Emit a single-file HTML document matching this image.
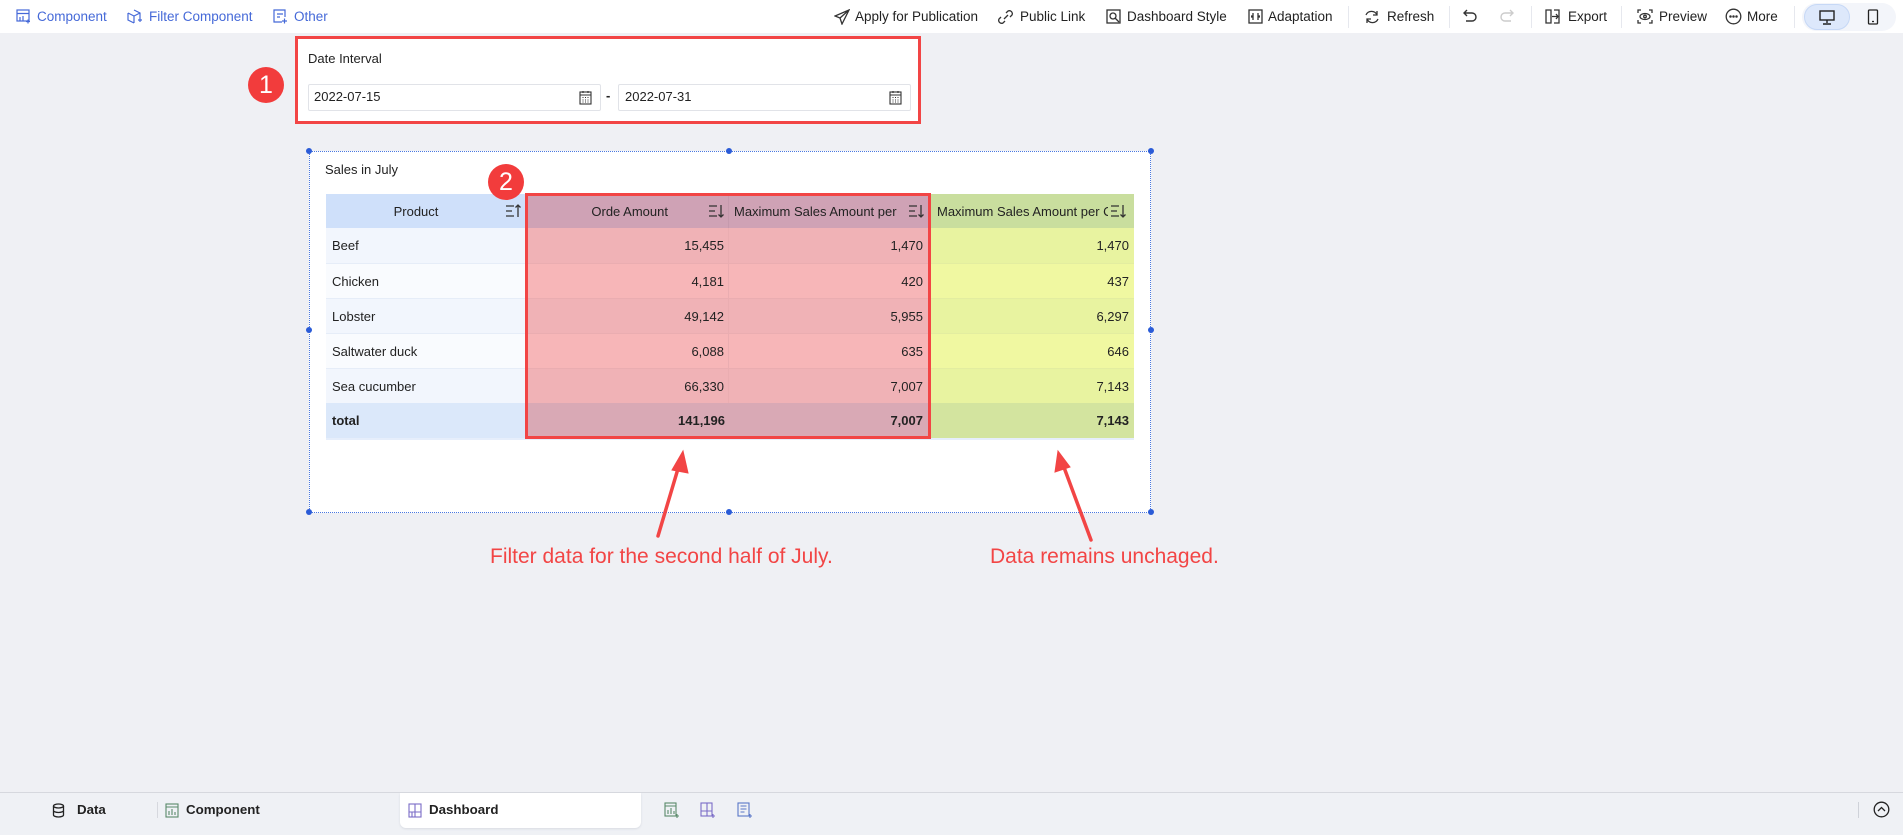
<!DOCTYPE html>
<html><head><meta charset="utf-8"><style>
*{margin:0;padding:0;box-sizing:border-box}
body{width:1903px;height:835px;overflow:hidden;background:#eff0f4;font-family:"Liberation Sans",Arial,sans-serif;position:relative;color:#222}
.a{position:absolute}
.top{left:0;top:0;width:1903px;height:33px;background:#fff}
.t{position:absolute;top:8px;font-size:13.5px;line-height:17px;color:#222;white-space:nowrap}
.b{color:#4569d8}
.sep{position:absolute;top:6px;width:1px;height:22px;background:#e6e8ee}
svg{position:absolute}
.cell{position:absolute;font-size:13px;display:flex;align-items:center}
</style></head><body>
<div class="a top"></div>
<svg style="left:16px;top:9px" width="15" height="15" viewBox="0 0 15 15" fill="none" stroke="#4569d8" stroke-width="1.2"><rect x="1" y="1" width="12" height="11"/><path d="M1 4.5h12M4 8v4M7 7v5M10 12.5h4M12 10.5v4"/></svg>
<div class="t b" style="left:37px">Component</div>
<svg style="left:127px;top:9px" width="16" height="16" viewBox="0 0 16 16" fill="none" stroke="#4569d8" stroke-width="1.2"><path d="M7 1l6 3v5M1 4l6 3 6-3M1 4v7l6 3M7 7v7"/><path d="M11 11h4M13 9v4"/></svg>
<div class="t b" style="left:149px">Filter Component</div>
<svg style="left:273px;top:9px" width="15" height="15" viewBox="0 0 15 15" fill="none" stroke="#4569d8" stroke-width="1.2"><path d="M9 13H1V1h11v7M4 5h6M4 8h3M9 12h5M11.5 9.5v5"/></svg>
<div class="t b" style="left:294px">Other</div>
<svg style="left:834px;top:9px" width="16" height="16" viewBox="0 0 16 16" fill="none" stroke="#333" stroke-width="1.3"><path d="M15 1L1 7l5 2 2 6z M6 9l9-8"/></svg>
<div class="t" style="left:855px">Apply for Publication</div>
<svg style="left:998px;top:9px" width="15" height="16" viewBox="0 0 15 16" fill="none" stroke="#333" stroke-width="1.3"><path d="M6 10l4-4M8 4l2-2a3 3 0 014 4l-2 2M7 12l-2 2a3 3 0 01-4-4l2-2"/></svg>
<div class="t" style="left:1020px">Public Link</div>
<svg style="left:1106px;top:9px" width="15" height="15" viewBox="0 0 15 15" fill="none" stroke="#333" stroke-width="1.3"><rect x="1" y="1" width="13" height="13"/><circle cx="7" cy="7" r="3"/><path d="M9 9l4 4"/></svg>
<div class="t" style="left:1127px">Dashboard Style</div>
<svg style="left:1248px;top:9px" width="15" height="15" viewBox="0 0 15 15" fill="none" stroke="#333" stroke-width="1.3"><rect x="1" y="1" width="13" height="13"/><path d="M5 4v3H3M10 4v3h2M5 11V8H3M10 11V8h2"/></svg>
<div class="t" style="left:1268px">Adaptation</div>
<div class="sep" style="left:1348px"></div>
<svg style="left:1364px;top:9px" width="16" height="16" viewBox="0 0 16 16" fill="none" stroke="#333" stroke-width="1.3"><path d="M13 6a6 6 0 00-11 0M3 10a6 6 0 0011 0M13 2v4H9M3 14v-4h4"/></svg>
<div class="t" style="left:1387px">Refresh</div>
<div class="sep" style="left:1449px"></div>
<svg style="left:1463px;top:9px" width="15" height="15" viewBox="0 0 15 15" fill="none" stroke="#333" stroke-width="1.4"><path d="M4 1L1 4l3 3M1 4h8a4 4 0 010 8H3"/></svg>
<svg style="left:1499px;top:9px" width="15" height="15" viewBox="0 0 15 15" fill="none" stroke="#ccc" stroke-width="1.4"><path d="M11 1l3 3-3 3M14 4H6a4 4 0 000 8h6"/></svg>
<div class="sep" style="left:1531px"></div>
<svg style="left:1545px;top:9px" width="16" height="15" viewBox="0 0 16 15" fill="none" stroke="#333" stroke-width="1.3"><path d="M1 1h5v13H1zM9 1h5v13H9M7 7.5h6M11 5l2 2.5-2 2.5"/></svg>
<div class="t" style="left:1568px">Export</div>
<div class="sep" style="left:1621px"></div>
<svg style="left:1637px;top:9px" width="16" height="15" viewBox="0 0 16 15" fill="none" stroke="#333" stroke-width="1.3"><path d="M1 4V1h3M12 1h3v3M15 11v3h-3M4 14H1v-3"/><ellipse cx="8" cy="7.5" rx="5" ry="3"/><circle cx="8" cy="7.5" r="1.3"/></svg>
<div class="t" style="left:1659px">Preview</div>
<svg style="left:1725px;top:8px" width="17" height="17" viewBox="0 0 17 17" fill="none" stroke="#333" stroke-width="1.3"><circle cx="8.5" cy="8.5" r="7.3"/><circle cx="5.5" cy="8.5" r=".6" fill="#333"/><circle cx="8.5" cy="8.5" r=".6" fill="#333"/><circle cx="11.5" cy="8.5" r=".6" fill="#333"/></svg>
<div class="t" style="left:1747px">More</div>
<div class="sep" style="left:1794px"></div>
<div class="a" style="left:1802px;top:3px;width:94px;height:28px;border-radius:14px;background:#f3f5fa"></div>
<div class="a" style="left:1804px;top:4px;width:46px;height:26px;border-radius:13px;background:#dde8fb;border:1px solid #c6d8f6"></div>
<svg style="left:1819px;top:10px" width="16" height="15" viewBox="0 0 16 15" fill="none" stroke="#222" stroke-width="1.4"><rect x="1" y="1" width="14" height="9"/><path d="M8 10v3M4 14h8"/></svg>
<svg style="left:1867px;top:9px" width="12" height="16" viewBox="0 0 12 16" fill="none" stroke="#222" stroke-width="1.3"><rect x="1.5" y="1" width="9" height="14" rx="1"/><path d="M5 12.5h2"/></svg>

<div class="a" style="left:295px;top:36px;width:626px;height:88px;background:#fff;border:3px solid #f24545"></div>
<div class="a" style="left:308px;top:51px;font-size:13px">Date Interval</div>
<div class="a" style="left:308px;top:84px;width:293px;height:27px;border:1px solid #e1e3e8;border-radius:2px;background:#fff"></div>
<div class="a" style="left:314px;top:89px;font-size:13px">2022-07-15</div>
<div class="a" style="left:618px;top:84px;width:293px;height:27px;border:1px solid #e1e3e8;border-radius:2px;background:#fff"></div>
<div class="a" style="left:625px;top:89px;font-size:13px">2022-07-31</div>
<div class="a" style="left:606px;top:88px;font-size:13px;font-weight:bold">-</div>
<svg style="left:579px;top:90px" width="13" height="15" viewBox="0 0 13 15" fill="none" stroke="#333" stroke-width="1.1"><rect x="1" y="2" width="11" height="12"/><path d="M1 5h11M4 1v2M9 1v2"/><path d="M3.5 7.5h1M6 7.5h1M8.5 7.5h1M3.5 10h1M6 10h1M8.5 10h1M3.5 12h1M6 12h1M8.5 12h1"/></svg>
<svg style="left:889px;top:90px" width="13" height="15" viewBox="0 0 13 15" fill="none" stroke="#333" stroke-width="1.1"><rect x="1" y="2" width="11" height="12"/><path d="M1 5h11M4 1v2M9 1v2"/><path d="M3.5 7.5h1M6 7.5h1M8.5 7.5h1M3.5 10h1M6 10h1M8.5 10h1M3.5 12h1M6 12h1M8.5 12h1"/></svg>
<div class="a" style="left:248px;top:67px;width:36px;height:36px;border-radius:50%;background:#f23c3c;color:#fff;font-size:25px;text-align:center;line-height:36px">1</div>

<div class="a" style="left:309px;top:151px;width:842px;height:362px;background:#fff;border:1px dotted #4a78e0"></div>
<div class="a" style="left:306px;top:148px;width:6px;height:6px;border-radius:50%;background:#2a5bd7"></div>
<div class="a" style="left:726px;top:148px;width:6px;height:6px;border-radius:50%;background:#2a5bd7"></div>
<div class="a" style="left:1148px;top:148px;width:6px;height:6px;border-radius:50%;background:#2a5bd7"></div>
<div class="a" style="left:306px;top:327px;width:6px;height:6px;border-radius:50%;background:#2a5bd7"></div>
<div class="a" style="left:1148px;top:327px;width:6px;height:6px;border-radius:50%;background:#2a5bd7"></div>
<div class="a" style="left:306px;top:509px;width:6px;height:6px;border-radius:50%;background:#2a5bd7"></div>
<div class="a" style="left:726px;top:509px;width:6px;height:6px;border-radius:50%;background:#2a5bd7"></div>
<div class="a" style="left:1148px;top:509px;width:6px;height:6px;border-radius:50%;background:#2a5bd7"></div>
<div class="a" style="left:325px;top:162px;font-size:13px">Sales in July</div>

<div class="a" style="left:326px;top:194px;width:808px;height:246px;background:#e6eefb"></div>
<div class="cell" style="left:326px;top:194px;width:200px;height:34px;background:#cfe0fa;justify-content:center;padding-right:20px">Product</div>
<div class="cell" style="left:526px;top:194px;width:203px;height:34px;background:#cfa2b5;justify-content:flex-end;padding-right:60px;border-right:1px solid #c59aad">Orde Amount</div>
<div class="cell" style="left:729px;top:194px;width:202px;height:34px;background:#cfa2b5;padding-left:5px;overflow:hidden;white-space:nowrap">Maximum Sales Amount per</div>
<div class="cell" style="left:931px;top:194px;width:203px;height:34px;background:#c9de9e;padding-left:6px;overflow:hidden;white-space:nowrap">Maximum Sales Amount per C</div>
<div class="a" style="left:1108px;top:194px;width:26px;height:34px;background:#c9de9e"></div>
<div class="a" style="left:903px;top:194px;width:26px;height:34px;background:#cfa2b5"></div>
<svg style="left:505px;top:204px" width="16" height="14" viewBox="0 0 16 14" fill="none" stroke="#333" stroke-width="1.3"><path d="M1 2h8M1 7h6M1 12h8M13 13V1M10.5 3.5L13 1l2.5 2.5"/></svg>
<svg style="left:708px;top:204px" width="16" height="14" viewBox="0 0 16 14" fill="none" stroke="#333" stroke-width="1.3"><path d="M1 2h8M1 7h6M1 12h8M13 1v12M10.5 10.5L13 13l2.5-2.5"/></svg>
<svg style="left:908px;top:204px" width="16" height="14" viewBox="0 0 16 14" fill="none" stroke="#333" stroke-width="1.3"><path d="M1 2h8M1 7h6M1 12h8M13 1v12M10.5 10.5L13 13l2.5-2.5"/></svg>
<svg style="left:1110px;top:204px" width="16" height="14" viewBox="0 0 16 14" fill="none" stroke="#333" stroke-width="1.3"><path d="M1 2h8M1 7h6M1 12h8M13 1v12M10.5 10.5L13 13l2.5-2.5"/></svg>

<div class="cell" style="left:326px;top:228px;width:200px;height:35px;background:#f2f6fd;padding-left:6px">Beef</div>
<div class="cell" style="left:526px;top:228px;width:203px;height:35px;background:#f0b2b6;justify-content:flex-end;padding-right:4px;border-right:1px solid #eaadb1">15,455</div>
<div class="cell" style="left:729px;top:228px;width:202px;height:35px;background:#f0b2b6;justify-content:flex-end;padding-right:8px">1,470</div>
<div class="cell" style="left:931px;top:228px;width:203px;height:35px;background:#e8f3a0;justify-content:flex-end;padding-right:5px">1,470</div>

<div class="cell" style="left:326px;top:263px;width:200px;height:35px;background:#f9fbfe;padding-left:6px;border-top:1px solid #e6edf8">Chicken</div>
<div class="cell" style="left:526px;top:263px;width:203px;height:35px;background:#f7b6b8;justify-content:flex-end;padding-right:4px;border-right:1px solid #eaadb1;border-top:1px solid #eaadb1">4,181</div>
<div class="cell" style="left:729px;top:263px;width:202px;height:35px;background:#f7b6b8;justify-content:flex-end;padding-right:8px;border-top:1px solid #eaadb1">420</div>
<div class="cell" style="left:931px;top:263px;width:203px;height:35px;background:#f0f8a1;justify-content:flex-end;padding-right:5px;border-top:1px solid #e3eda0">437</div>

<div class="cell" style="left:326px;top:298px;width:200px;height:35px;background:#f2f6fd;padding-left:6px;border-top:1px solid #e6edf8">Lobster</div>
<div class="cell" style="left:526px;top:298px;width:203px;height:35px;background:#f0b2b6;justify-content:flex-end;padding-right:4px;border-right:1px solid #eaadb1;border-top:1px solid #eaadb1">49,142</div>
<div class="cell" style="left:729px;top:298px;width:202px;height:35px;background:#f0b2b6;justify-content:flex-end;padding-right:8px;border-top:1px solid #eaadb1">5,955</div>
<div class="cell" style="left:931px;top:298px;width:203px;height:35px;background:#e8f3a0;justify-content:flex-end;padding-right:5px;border-top:1px solid #e3eda0">6,297</div>

<div class="cell" style="left:326px;top:333px;width:200px;height:35px;background:#f9fbfe;padding-left:6px;border-top:1px solid #e6edf8">Saltwater duck</div>
<div class="cell" style="left:526px;top:333px;width:203px;height:35px;background:#f7b6b8;justify-content:flex-end;padding-right:4px;border-right:1px solid #eaadb1;border-top:1px solid #eaadb1">6,088</div>
<div class="cell" style="left:729px;top:333px;width:202px;height:35px;background:#f7b6b8;justify-content:flex-end;padding-right:8px;border-top:1px solid #eaadb1">635</div>
<div class="cell" style="left:931px;top:333px;width:203px;height:35px;background:#f0f8a1;justify-content:flex-end;padding-right:5px;border-top:1px solid #e3eda0">646</div>

<div class="cell" style="left:326px;top:368px;width:200px;height:35px;background:#f2f6fd;padding-left:6px;border-top:1px solid #e6edf8">Sea cucumber</div>
<div class="cell" style="left:526px;top:368px;width:203px;height:35px;background:#f0b2b6;justify-content:flex-end;padding-right:4px;border-right:1px solid #eaadb1;border-top:1px solid #eaadb1">66,330</div>
<div class="cell" style="left:729px;top:368px;width:202px;height:35px;background:#f0b2b6;justify-content:flex-end;padding-right:8px;border-top:1px solid #eaadb1">7,007</div>
<div class="cell" style="left:931px;top:368px;width:203px;height:35px;background:#e8f3a0;justify-content:flex-end;padding-right:5px;border-top:1px solid #e3eda0">7,143</div>

<div class="cell" style="left:326px;top:403px;width:200px;height:35px;background:#dbe8fa;padding-left:6px;font-weight:bold">total</div>
<div class="cell" style="left:526px;top:403px;width:203px;height:35px;background:#d9a9b5;justify-content:flex-end;padding-right:4px;font-weight:bold">141,196</div>
<div class="cell" style="left:729px;top:403px;width:202px;height:35px;background:#d9a9b5;justify-content:flex-end;padding-right:8px;font-weight:bold">7,007</div>
<div class="cell" style="left:931px;top:403px;width:203px;height:35px;background:#d3e49f;justify-content:flex-end;padding-right:5px;font-weight:bold">7,143</div>

<div class="a" style="left:525px;top:193px;width:406px;height:246px;border:3px solid #f24545"></div>
<div class="a" style="left:488px;top:164px;width:36px;height:36px;border-radius:50%;background:#f23c3c;color:#fff;font-size:25px;text-align:center;line-height:36px">2</div>

<svg style="left:0;top:0" width="1903" height="835"><g stroke="#f24545" stroke-width="3.5" fill="#f24545" stroke-linecap="round"><path d="M658 536L680 462"/><path d="M683 451L672 470L688 473Z" stroke-width="1"/><path d="M1091 540L1062 462"/><path d="M1058 451L1055 472L1070 467Z" stroke-width="1"/></g></svg>
<div class="a" style="left:490px;top:545px;font-size:21px;color:#f24545;white-space:nowrap">Filter data for the second half of July.</div>
<div class="a" style="left:990px;top:545px;font-size:21px;color:#f24545;white-space:nowrap">Data remains unchaged.</div>

<div class="a" style="left:0;top:792px;width:1903px;height:43px;background:#eff1f5;border-top:1px solid #d6d8de"></div>
<div class="a" style="left:400px;top:793px;width:241px;height:35px;background:#fff;border-radius:0 0 6px 6px;box-shadow:0 1px 2px #d8dbe2"></div>
<svg style="left:52px;top:803px" width="13" height="15" viewBox="0 0 13 15" fill="none" stroke="#222" stroke-width="1.3"><ellipse cx="6.5" cy="3" rx="5" ry="2"/><path d="M1.5 3v9c0 1.1 2.2 2 5 2s5-.9 5-2V3M1.5 7.5c0 1.1 2.2 2 5 2s5-.9 5-2"/></svg>
<div class="a" style="left:77px;top:802px;font-size:13.3px;font-weight:bold">Data</div>
<div class="a" style="left:157px;top:802px;width:1px;height:16px;background:#d6d8de"></div>
<svg style="left:165px;top:803px" width="14" height="15" viewBox="0 0 14 15" fill="none" stroke="#5a8a6a" stroke-width="1.1"><rect x="1" y="1" width="12" height="13"/><path d="M1 4h12M4 12V8M7 12V6M10 12V9"/></svg>
<div class="a" style="left:186px;top:802px;font-size:13.3px;font-weight:bold">Component</div>
<svg style="left:408px;top:803px" width="14" height="15" viewBox="0 0 14 15" fill="none" stroke="#7b6cc7" stroke-width="1.1"><rect x="1" y="1" width="12" height="13"/><path d="M7 1v13M1 9h12M4 9v5"/></svg>
<div class="a" style="left:429px;top:802px;font-size:13.3px;font-weight:bold">Dashboard</div>
<svg style="left:664px;top:802px" width="16" height="17" viewBox="0 0 16 17" fill="none" stroke="#5a8a6a" stroke-width="1.1"><rect x="1" y="1" width="11" height="13"/><path d="M1 4h11M4 12V8M7 12V6M10 12V9M11 14h4M13 12v4" /></svg>
<svg style="left:700px;top:802px" width="16" height="17" viewBox="0 0 16 17" fill="none" stroke="#7b6cc7" stroke-width="1.1"><rect x="1" y="1" width="11" height="13"/><path d="M7 1v13M1 9h11M11 14h4M13 12v4"/></svg>
<svg style="left:737px;top:802px" width="16" height="17" viewBox="0 0 16 17" fill="none" stroke="#5a77c7" stroke-width="1.1"><rect x="1" y="1" width="11" height="13"/><path d="M3.5 4h6M3.5 7h6M3.5 10h4M11 14h4M13 12v4"/></svg>
<div class="a" style="left:1858px;top:802px;width:1px;height:16px;background:#cfd2d9"></div>
<svg style="left:1873px;top:801px" width="17" height="17" viewBox="0 0 17 17" fill="none" stroke="#222" stroke-width="1.3"><circle cx="8.5" cy="8.5" r="7.3"/><path d="M5 10l3.5-3.5L12 10"/></svg>
</body></html>
